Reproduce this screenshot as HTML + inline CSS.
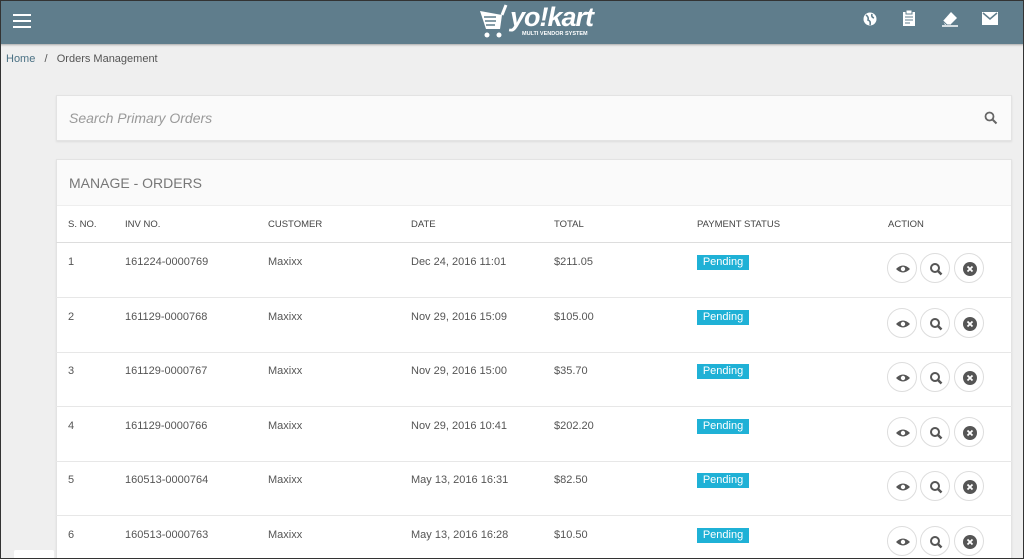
<!DOCTYPE html><html style="width:1024px;height:559px;overflow:hidden"><head><style>
*{box-sizing:border-box;margin:0;padding:0}
body{width:1024px;height:559px;overflow:hidden;background:#efefef;font-family:"Liberation Sans",sans-serif;position:relative}
.hdr{position:absolute;left:0;top:0;width:1024px;height:44px;background:#5f7d8c;box-shadow:0 1px 2px rgba(0,0,0,.3)}
.bc{position:absolute;top:53px;left:6px;font-size:11px;color:#555}
.bc a{color:#4b7184}
.box{position:absolute;left:56px;width:956px;background:#fafafa;border:1px solid #e3e3e3;box-shadow:0 1px 2px rgba(0,0,0,.08)}
.t{position:absolute;font-size:11px;color:#555}
.th{font-size:9.5px;color:#444}
.sep{position:absolute;left:56px;width:956px;height:1px;background:#e7e7e7}
.pend{position:absolute;left:697px;width:52px;height:15px;background:#1fb1d6;color:#fff;font-size:11px;line-height:15px;text-align:center}
.btn{position:absolute;width:30px;height:30px;border-radius:50%;border:1px solid #ddd;background:#fff}
.btn svg{position:absolute;left:7px;top:7px}
</style></head><body>
<div class="hdr">
<div style="position:absolute;left:13px;top:14px;width:18px;height:2px;background:#fff;box-shadow:0 6px 0 #fff,0 12px 0 #fff"></div>
<svg style="position:absolute;left:478px;top:3px" width="30" height="36" viewBox="0 0 30 36"><path d="M2 8 L24 12 L22 26 L8 26 Z" fill="#fff"/><path d="M24 12 L28 2" stroke="#fff" stroke-width="3"/><circle cx="9" cy="32" r="2.5" fill="#fff"/><circle cx="21" cy="32" r="2.5" fill="#fff"/><path d="M6 14h12M7 18h11M8 22h9" stroke="#5f7d8c" stroke-width="1.5"/></svg>
<div style="position:absolute;left:510px;top:2px;color:#fff;font-weight:bold;font-style:italic;font-size:27px;letter-spacing:-1px">yo!kart</div>
<div style="position:absolute;left:522px;top:31px;color:#fff;font-weight:bold;font-size:5.5px">MULTI VENDOR SYSTEM</div>
<svg style="position:absolute;left:862px;top:11px" width="16" height="16" viewBox="0 0 16 16"><circle cx="8" cy="8" r="6.5" fill="#fff"/><path d="M4 4 Q7 6 6 9 Q9 10 8 14 M10 3 Q9 6 12 7" stroke="#5f7d8c" stroke-width="1.6" fill="none"/></svg>
<svg style="position:absolute;left:902px;top:10px" width="14" height="17" viewBox="0 0 14 17"><rect x="1" y="2" width="12" height="14" fill="#fff"/><rect x="4" y="0" width="6" height="4" fill="#fff" stroke="#5f7d8c"/><path d="M3 7h8M3 10h8M3 13h5" stroke="#5f7d8c"/></svg>
<svg style="position:absolute;left:941px;top:10px" width="18" height="17" viewBox="0 0 18 17"><path d="M2 11 L10 2 L16 8 L9 15 H4 Z" fill="#fff"/><path d="M2 11 L6 15 L9 15" stroke="#5f7d8c" fill="none"/><path d="M1 16h16" stroke="#fff" stroke-width="1.5"/></svg>
<svg style="position:absolute;left:982px;top:12px" width="16" height="13" viewBox="0 0 16 13"><rect width="16" height="13" fill="#fff"/><path d="M1 1 L8 7 L15 1" stroke="#5f7d8c" stroke-width="1.5" fill="none"/></svg>
</div>
<div class="bc"><a>Home</a> &nbsp;&nbsp;/&nbsp;&nbsp; Orders Management</div>
<div class="box" style="top:95px;height:46px"><div style="position:absolute;left:12px;top:14px;font-size:14px;color:#999;font-style:italic">Search Primary Orders</div>
<svg style="position:absolute;left:927px;top:15px" width="14" height="14" viewBox="0 0 14 14"><circle cx="5.5" cy="5.5" r="4" stroke="#666" stroke-width="1.8" fill="none"/><path d="M8.5 8.5L12.5 12.5" stroke="#666" stroke-width="2"/></svg></div>
<div class="box" style="top:159px;height:420px;background:#fff">
<div style="height:46px;background:#fafafa;border-bottom:1px solid #eee;padding:15px 12px;font-size:14px;color:#777">MANAGE - ORDERS</div></div>
<div class="sep" style="top:242px;background:#ddd"></div>
<div class="t th" style="left:68px;top:219px">S. NO.</div><div class="t th" style="left:125px;top:219px">INV NO.</div><div class="t th" style="left:268px;top:219px">CUSTOMER</div><div class="t th" style="left:411px;top:219px">DATE</div><div class="t th" style="left:554px;top:219px">TOTAL</div><div class="t th" style="left:697px;top:219px">PAYMENT STATUS</div><div class="t th" style="left:888px;top:219px">ACTION</div>
<div id="rows"></div>
<div style="position:absolute;left:14px;top:550px;width:40px;height:9px;background:#fff;border-radius:2px"></div>
<div style="position:absolute;left:0;top:0;width:1024px;height:559px;border:1px solid #333;pointer-events:none"></div>
<script>
var d=[["1","161224-0000769","Dec 24, 2016 11:01","$211.05"],["2","161129-0000768","Nov 29, 2016 15:09","$105.00"],["3","161129-0000767","Nov 29, 2016 15:00","$35.70"],["4","161129-0000766","Nov 29, 2016 10:41","$202.20"],["5","160513-0000764","May 13, 2016 16:31","$82.50"],["6","160513-0000763","May 13, 2016 16:28","$10.50"]];
var h="";d.forEach(function(r,i){var y=256+i*54.5;
h+='<div class="t" style="left:68px;top:'+y+'px">'+r[0]+'</div><div class="t" style="left:125px;top:'+y+'px">'+r[1]+'</div><div class="t" style="left:268px;top:'+y+'px">Maxixx</div><div class="t" style="left:411px;top:'+y+'px">'+r[2]+'</div><div class="t" style="left:554px;top:'+y+'px">'+r[3]+'</div><div class="pend" style="top:'+(y-1)+'px">Pending</div>';
var by=y-3;
h+='<div class="btn" style="left:887px;top:'+by+'px"><svg width="16" height="16" viewBox="0 0 16 16"><path d="M1 8Q8 1 15 8Q8 15 1 8Z" fill="#555"/><circle cx="8" cy="8" r="2.2" fill="#fff"/></svg></div>';
h+='<div class="btn" style="left:920px;top:'+by+'px"><svg width="16" height="16" viewBox="0 0 16 16"><circle cx="7" cy="7" r="4" stroke="#555" stroke-width="2" fill="none"/><path d="M10 10L13.5 13.5" stroke="#555" stroke-width="2.5"/></svg></div>';
h+='<div class="btn" style="left:954px;top:'+by+'px"><svg width="16" height="16" viewBox="0 0 16 16"><circle cx="8" cy="8" r="7" fill="#555"/><path d="M5.5 5.5L10.5 10.5M10.5 5.5L5.5 10.5" stroke="#fff" stroke-width="1.8"/></svg></div>';
if(i<5)h+='<div class="sep" style="top:'+(297+i*54.5)+'px"></div>';});
document.getElementById("rows").innerHTML=h;
</script>
</body></html>
